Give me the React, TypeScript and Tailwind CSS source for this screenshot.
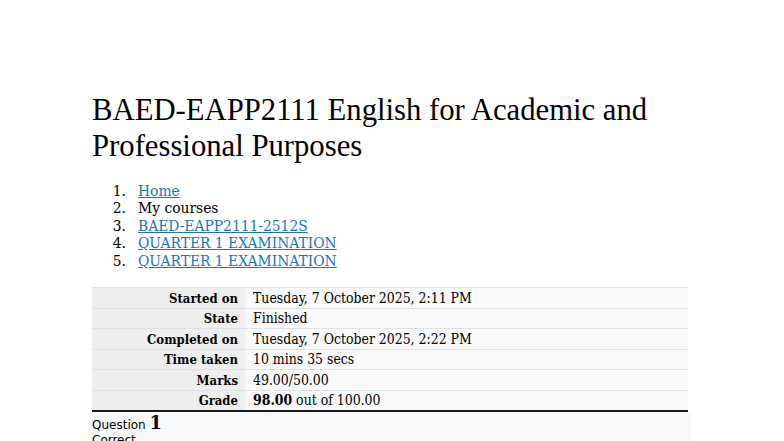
import React from "react";

const rows: { label: string; value: React.ReactNode }[] = [
  { label: "Started on", value: "Tuesday, 7 October 2025, 2:11 PM" },
  { label: "State", value: "Finished" },
  { label: "Completed on", value: "Tuesday, 7 October 2025, 2:22 PM" },
  { label: "Time taken", value: "10 mins 35 secs" },
  { label: "Marks", value: "49.00/50.00" },
  {
    label: "Grade",
    value: (
      <span>
        <b className="font-bold">98.00</b> out of 100.00
      </span>
    ),
  },
];

const crumbs: { text: string; link: boolean }[] = [
  { text: "Home", link: true },
  { text: "My courses", link: false },
  { text: "BAED-EAPP2111-2512S", link: true },
  { text: "QUARTER 1 EXAMINATION", link: true },
  { text: "QUARTER 1 EXAMINATION", link: true },
];

export default function App() {
  return (
    <div className="w-[784px] h-[441px] overflow-hidden bg-white text-black">
      <div className="pl-[92px] pt-[93px] w-[700px]">
        <h1 className="text-[30.7px] leading-[35.5px] font-normal font-['Liberation_Serif',serif]">
          BAED-EAPP2111 English for Academic and Professional Purposes
        </h1>
        <ol className="mt-[18.5px] font-['DejaVu_Serif_Condensed','DejaVu_Serif',serif] text-[15.4px] leading-[17.5px]">
          {crumbs.map((c, i) => (
            <li key={i} className="flex">
              <span className="w-[34px] text-right">{i + 1}.</span>
              <span className="ml-[12px]">
                {c.link ? (
                  <a href="#" className="text-[#1a73c8] underline">
                    {c.text}
                  </a>
                ) : (
                  c.text
                )}
              </span>
            </li>
          ))}
        </ol>
        <div className="mt-[17px] w-[596px] font-['DejaVu_Serif_Condensed','DejaVu_Serif',serif] text-[13.9px] border-b-2 border-[#1a1a1a]">
          {rows.map((r, i) => (
            <div key={i} className="flex h-[20.5px] items-center border-t border-[#dee2e6]">
              <div className="w-[153px] h-full flex items-center justify-end pr-[7px] pt-[1px] bg-[#eeeeee] font-bold text-[13px]">
                {r.label}
              </div>
              <div className="flex-1 h-full flex items-center pl-[8px] pt-[1px] bg-[#f9f9f9]">{r.value}</div>
            </div>
          ))}
        </div>
        <div className="w-[599px] bg-[#f8f9fa] h-[40px] pt-[3px] font-['DejaVu_Sans',sans-serif] text-[12px] leading-[15px]">
          <div>
            Question <span className="font-['DejaVu_Serif',serif] font-bold text-[18px]">1</span>
          </div>
          <div>Correct</div>
        </div>
      </div>
    </div>
  );
}
